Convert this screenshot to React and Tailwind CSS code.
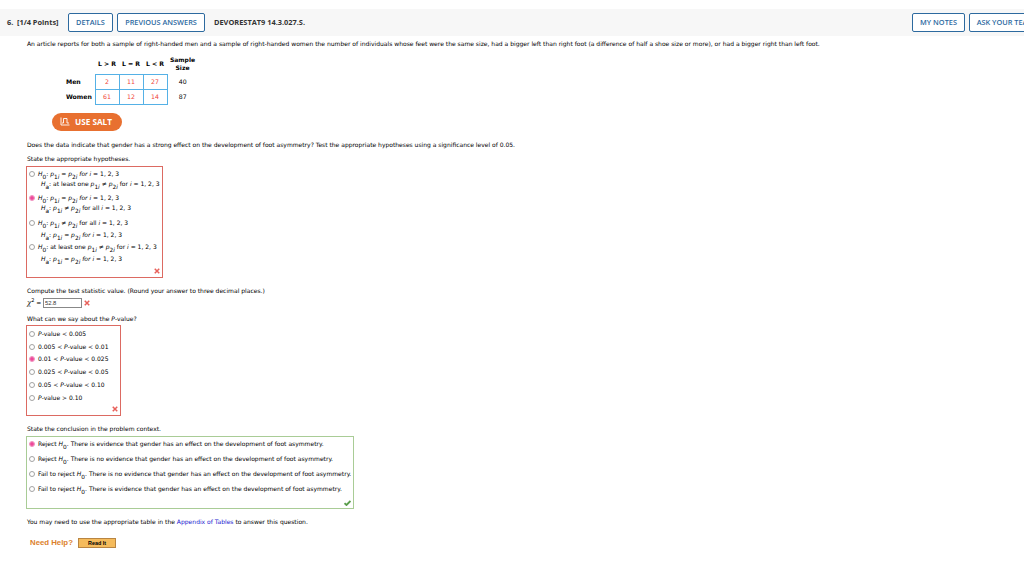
import React, { useState } from "react";

const hypotheses = [
  {
    gap: "mt-[2px]",
    second: "h-[8px]",
    h0: { op: "=", tail: "for" },
    ha: { least: true, op: "≠", tail: "for", roman: true },
  },
  {
    gap: "mt-[5px]",
    second: "h-[8px]",
    h0: { op: "=", tail: "for" },
    ha: { op: "≠", tail: "for all", roman: true },
  },
  {
    gap: "mt-[6px]",
    second: "h-[12px]",
    h0: { op: "≠", tail: "for all", roman: true },
    ha: { op: "=", tail: "for" },
  },
  {
    gap: "mt-px",
    second: "h-[13px]",
    h0: { least: true, op: "≠", tail: "for", roman: true },
    ha: { op: "=", tail: "for" },
  },
];

const pValues = [
  ["", "< 0.005"],
  ["0.005 <", "< 0.01"],
  ["0.01 <", "< 0.025"],
  ["0.025 <", "< 0.05"],
  ["0.05 <", "< 0.10"],
  ["", "> 0.10"],
];

const conclusions = [
  ["Reject", "There is evidence that gender has an effect on the development of foot asymmetry."],
  ["Reject", "There is no evidence that gender has an effect on the development of foot asymmetry."],
  ["Fail to reject", "There is no evidence that gender has an effect on the development of foot asymmetry."],
  ["Fail to reject", "There is evidence that gender has an effect on the development of foot asymmetry."],
];

const tableRows = [
  { label: "Men", values: [2, 11, 27], total: 40 },
  { label: "Women", values: [61, 12, 14], total: 87 },
];

const Sub = ({ children }) => (
  <span className="relative top-[3px] text-[5.8px]">{children}</span>
);

const Radio = ({ checked, onClick }) => (
  <button
    onClick={onClick}
    className={`flex h-[6px] w-[6px] shrink-0 items-center justify-center rounded-full border bg-white ${
      checked ? "border-[#f08abb]" : "border-[#a3a3a3]"
    }`}
  >
    {checked && <span className="h-1 w-1 shrink-0 rounded-full bg-[#ec4899]" />}
  </button>
);

const Wrong = () => (
  <svg viewBox="0 0 12 12" preserveAspectRatio="none" className="h-[6px] w-[6px] shrink-0">
    <path d="M1.5 1.5L10.5 10.5M10.5 1.5L1.5 10.5" stroke="#e8605a" strokeWidth="3" />
  </svg>
);

const Correct = () => (
  <svg viewBox="0 0 14 12" className="h-[6px] w-[7px]">
    <path d="M1 6.5L5 10L13 2" fill="none" stroke="#5a9e4b" strokeWidth="3.8" />
  </svg>
);

const Hypothesis = ({ sub, least, op, tail, roman }) => (
  <span className="whitespace-pre">
    <i>H</i>
    <Sub>{sub}</Sub>: {least && "at least one "}
    <i>p</i>
    <Sub>1<i>i</i></Sub> {op} <i>p</i>
    <Sub>2<i>i</i></Sub> <span className={roman ? "" : "italic"}>{tail}</span> <i>i</i> = 1, 2, 3
  </span>
);

const HeaderButton = ({ className, children }) => (
  <button
    className={`h-[19px] shrink-0 rounded-[2px] border border-[#2d6a9f] bg-white pb-px font-["Open_Sans"] text-[7.35px] font-semibold whitespace-nowrap text-[#2d6a9f] ${className}`}
  >
    {children}
  </button>
);

const App = () => {
  const [hypothesis, setHypothesis] = useState(1);
  const [pValue, setPValue] = useState(2);
  const [conclusion, setConclusion] = useState(0);

  return (
    <div className="h-[572px] w-[1024px] overflow-hidden bg-white pt-[9px] font-['DejaVu_Sans',sans-serif] text-[6.02px] leading-[10px] whitespace-nowrap text-black">
      {/* Question header */}
      <header className="flex h-[27px] items-center bg-[#f7f7f7] font-['Open_Sans',sans-serif] text-[7.4px] font-bold text-[#333]">
        <span className="ml-[7px] w-[10px] pb-px">6.</span>
        <span className="w-[51px] pb-px">[1/4 Points]</span>
        <HeaderButton className="w-[45px]">DETAILS</HeaderButton>
        <HeaderButton className="ml-1 w-[88px]">PREVIOUS ANSWERS</HeaderButton>
        <span className="ml-[9px] pb-px">DEVORESTAT9 14.3.027.S.</span>
        <HeaderButton className="ml-auto w-[53px]">MY NOTES</HeaderButton>
        <HeaderButton className="-mr-[30px] ml-1 w-[85px]">ASK YOUR TEACHER</HeaderButton>
      </header>

      <main className="pl-[26px]">
        <p className="mt-[3px] h-[10px] pl-px">
          An article reports for both a sample of right-handed men and a sample of right-handed women the number of
          individuals whose feet were the same size, had a bigger left than right foot (a difference of half a shoe size
          or more), or had a bigger right than left foot.
        </p>

        {/* Observed counts */}
        <table className="mt-[5px] ml-[38px] table-fixed border-collapse text-center text-[6.2px]">
          <colgroup>
            <col className="w-[31px]" />
            <col className="w-[24px]" />
            <col className="w-[24px]" />
            <col className="w-[24px]" />
            <col className="w-[31px]" />
          </colgroup>
          <thead>
            <tr className="h-[20px] leading-[8px]">
              <th />
              <th className="p-0">L &gt; R</th>
              <th className="p-0">L = R</th>
              <th className="p-0">L &lt; R</th>
              <th className="p-0 pb-px text-[6px]">Sample<br />Size</th>
            </tr>
          </thead>
          <tbody>
            {tableRows.map((row) => (
              <tr key={row.label} className="h-[15px]">
                <th className="p-0 pl-[2px] text-left">{row.label}</th>
                {row.values.map((value, index) => (
                  <td key={index} className="border border-[#55b1e6] p-0 text-[#f04438]">{value}</td>
                ))}
                <td className="p-0">{row.total}</td>
              </tr>
            ))}
          </tbody>
        </table>

        <button className="mt-[8px] ml-[26px] flex h-[18px] w-[70px] items-center rounded-full bg-[#e87030] pl-[8px] font-['Open_Sans',sans-serif] text-[8.2px] font-bold text-white">
          <svg viewBox="0 0 20 18" className="mr-[5px] h-[9px] w-[10px]" fill="none" stroke="white" strokeWidth="1.8">
            <path d="M2 1V16H19M4 12H7V3H14V12H18" />
          </svg>
          USE SALT
        </button>

        <p className="mt-[9px] h-[10px] pl-px text-[6px]">
          Does the data indicate that gender has a strong effect on the development of foot asymmetry? Test the
          appropriate hypotheses using a significance level of 0.05.
        </p>
        <p className="mt-1 h-[10px] pl-px">State the appropriate hypotheses.</p>

        <section className="mt-[2px] h-[112px] w-[137px] border border-[#dc6a62] pl-[2px]">
          {hypotheses.map((item, index) => (
            <div key={index} className={item.gap}>
              <div className="flex h-[11px] items-center gap-[3px]">
                <Radio checked={hypothesis === index} onClick={() => setHypothesis(index)} />
                <Hypothesis sub="0" {...item.h0} />
              </div>
              <div className={`flex items-center pl-[12px] ${item.second}`}>
                <Hypothesis sub="a" {...item.ha} />
              </div>
            </div>
          ))}
          <div className="mt-[2px] flex justify-end pr-[2px]"><Wrong /></div>
        </section>

        <p className="mt-[8px] h-[10px] pl-px">
          Compute the test statistic value. (Round your answer to three decimal places.)
        </p>
        <div className="mt-[2px] flex h-[10px] items-center pl-px">
          <span className="w-[16px]">
            <i className="font-['DejaVu_Serif'] text-[7px]">χ</i>
            <span className="relative -top-[3px] text-[5px]">2</span> =
          </span>
          <input
            defaultValue="52.8"
            className="h-[10px] w-[39px] border border-[#888] pl-px font-['Liberation_Sans'] text-[5.8px] text-[#333]"
          />
          <span className="ml-[2px] flex pt-px"><Wrong /></span>
        </div>
        <p className="mt-[6px] h-[10px] pl-px">What can we say about the <i>P</i>-value?</p>

        <section className="mt-px h-[91px] w-[95px] border border-[#dc6a62] pt-[2px] pl-[2px]">
          {pValues.map(([before, after], index) => (
            <div key={index} className="flex h-[12.8px] items-center gap-[3px]">
              <Radio checked={pValue === index} onClick={() => setPValue(index)} />
              <span>{before} <i>P</i>-value {after}</span>
            </div>
          ))}
          <div className="mt-[2px] flex justify-end pr-[2px]"><Wrong /></div>
        </section>

        <p className="mt-[8px] h-[10px] pl-px">State the conclusion in the problem context.</p>

        <section className="mt-[2px] h-[73px] w-[328px] border border-[#a9cc96] pl-[2px]">
          {conclusions.map(([verb, text], index) => (
            <div key={index} className="flex h-[15px] items-center gap-[3px]">
              <Radio checked={conclusion === index} onClick={() => setConclusion(index)} />
              <span>{verb} <i>H</i><Sub>0</Sub>. {text}</span>
            </div>
          ))}
          <div className="mt-[3px] flex justify-end pr-[2px]"><Correct /></div>
        </section>

        <p className="mt-[8px] h-[10px] pl-px">
          You may need to use the appropriate table in the{" "}
          <a href="#tables" className="text-[#1c1ccf]">Appendix of Tables</a> to answer this question.
        </p>
        <div className="mt-[11px] flex h-[10px] items-center pl-1 font-['Liberation_Sans',sans-serif]">
          <span className="w-[48px] text-[7.8px] font-bold text-[#dc7f2c]">Need Help?</span>
          <button className="h-[10px] w-[38px] border border-[#b98542] bg-[#f5bb5c] text-[5.4px] leading-[8px] font-bold">
            Read It
          </button>
        </div>
      </main>
    </div>
  );
};

export default App;
